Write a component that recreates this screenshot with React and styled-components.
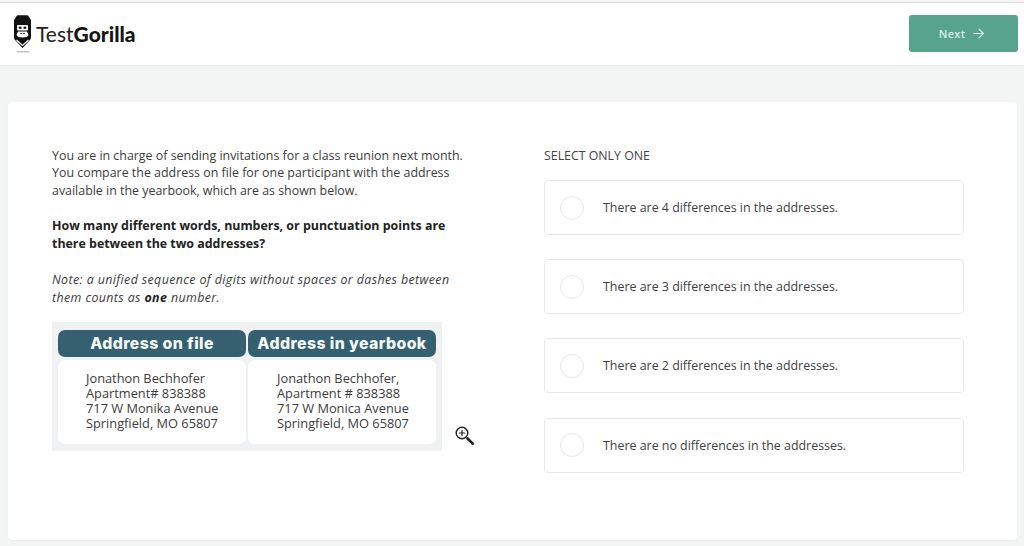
import React from "react";
import styled, { createGlobalStyle } from "styled-components";

const Global = createGlobalStyle`
  html, body { margin: 0; padding: 0; background: #f3f5f5; }
  body { font-family: "Open Sans", "Liberation Sans", sans-serif; color: #3a3a3a; }
  #root { height: 546px; overflow: hidden; }
`;

const Page = styled.div`
  height: 546px;
  display: flex;
  flex-direction: column;
  box-sizing: border-box;
  padding-top: 2px;
  background: #f3f5f5;
`;

const Header = styled.header`
  height: 64px;
  flex: none;
  box-sizing: border-box;
  background: #fff;
  border-top: 1px solid #dfe1e1;
  border-bottom: 1px solid #e9ecec;
  display: flex;
  align-items: flex-start;
  justify-content: space-between;
  padding: 12px 6px 0 13px;
`;

const Logo = styled.div`
  display: flex;
  align-items: flex-start;
  gap: 3px;
`;

const LogoText = styled.div`
  font-family: "Lato", "Open Sans", sans-serif;
  font-size: 21px;
  line-height: 24px;
  margin-top: 7px;
  color: #222;
  font-weight: 400;
  b { font-weight: 900; color: #151515; }
`;

const NextButton = styled.button`
  width: 109px;
  height: 37px;
  border: 0;
  border-radius: 3px;
  background: #58a38c;
  color: #d9efe8;
  font-family: inherit;
  font-size: 11px;
  font-weight: 600;
  letter-spacing: 0.3px;
  display: flex;
  align-items: center;
  justify-content: center;
  gap: 7px;
  padding: 0 3px 0 0;
`;

const Card = styled.main`
  margin: 36px 7px 0 8px;
  height: 438px;
  background: #fff;
  border-radius: 4px;
  box-shadow: 0 1px 2px rgba(0, 0, 0, 0.04);
  display: grid;
  grid-template-columns: 492px 420px;
  box-sizing: border-box;
  padding: 44.5px 0 0 44px;
`;

const Left = styled.section`
  width: 440px;
  display: flex;
  flex-direction: column;
`;

const Para = styled.p`
  margin: 0 0 17.5px;
  font-size: 12.41px;
  line-height: 17.75px;
  color: #3c3c3c;
  white-space: nowrap;
  font-style: ${(p) => (p.$italic ? "italic" : "normal")};
  font-weight: ${(p) => (p.$bold ? 700 : 400)};
  ${(p) => p.$bold && "color: #222;"}
  ${(p) => p.$italic && "letter-spacing: 0.39px; margin: 0.75px 0 15.5px;"}
  b { font-weight: 700; color: #222; }
`;

const ImageRow = styled.div`
  display: flex;
  align-items: flex-end;
  gap: 13px;
`;

const Figure = styled.div`
  width: 390px;
  height: 129px;
  box-sizing: border-box;
  background: #eff1f2;
  padding: 8px 6px 7px;
  display: grid;
  grid-template-columns: 188px 188px;
  grid-template-rows: 27px 1fr;
  column-gap: 2px;
  row-gap: 3px;
`;

const Th = styled.div`
  background: #34606f;
  border-radius: 7px;
  color: #f6f8f8;
  font-family: "Inter", "Open Sans", sans-serif;
  font-weight: 800;
  font-size: 15.8px;
  letter-spacing: 0.42px;
  display: flex;
  align-items: center;
  justify-content: center;
  white-space: nowrap;
`;

const Td = styled.div`
  background: #fff;
  border-radius: 7px;
  font-size: 12.8px;
  line-height: 15px;
  color: #3c3c3c;
  padding: 11px 0 0 ${(p) => p.$inset}px;
  white-space: nowrap;
`;

const ZoomIcon = styled.svg`
  width: 20px;
  height: 20px;
  flex: none;
  margin-bottom: 6px;
`;

const Right = styled.section`
  display: flex;
  flex-direction: column;
`;

const Select = styled.div`
  font-size: 12.35px;
  line-height: 17px;
  color: #444;
  margin-bottom: 16.5px;
`;

const Options = styled.div`
  display: flex;
  flex-direction: column;
  gap: 24.2px;
`;

const Option = styled.div`
  height: 55px;
  box-sizing: border-box;
  border: 1px solid #e8eaea;
  border-radius: 4px;
  background: #fff;
  display: flex;
  align-items: center;
  padding-left: 15px;
  gap: 19px;
  font-size: 12.41px;
  color: #3f3f3f;
`;

const Radio = styled.span`
  width: 24px;
  height: 24px;
  box-sizing: border-box;
  border: 1px solid #e6e8e8;
  border-radius: 50%;
  flex: none;
`;

const GorillaLogo = () => (
  <svg width="20" height="40" viewBox="0 0 20 40" aria-hidden="true">
    <path d="M4.500 0.300 H14 Q15.500 0.300 16 2 L18 5 V22 Q18 24 16.500 25.500 L9.500 33 L2.500 25.500 Q1 24 1 22 V5 L3 2 Q3.500 0.300 4.500 0.300 Z" fill="#111" />
    <rect x="4" y="10" width="11" height="5.500" rx="1" fill="#fff" />
    <rect x="5.800" y="11.600" width="2.600" height="2.200" fill="#111" />
    <rect x="10.600" y="11.600" width="2.600" height="2.200" fill="#111" />
    <path d="M5 16.500 H14 L15.500 20 Q14.500 22.500 9.500 22.500 Q4.500 22.500 3.500 20 Z" fill="#fff" />
    <circle cx="8" cy="18.500" r="0.800" fill="#111" />
    <circle cx="11" cy="18.500" r="0.800" fill="#111" />
    <path d="M3.500 25 L9.500 30.500 L15.500 25" fill="none" stroke="#fff" strokeWidth="1.100" />
    <rect x="3.500" y="36" width="13" height="1.500" rx="0.700" fill="#c4c4c4" />
  </svg>
);

const options = [
  "There are 4 differences in the addresses.",
  "There are 3 differences in the addresses.",
  "There are 2 differences in the addresses.",
  "There are no differences in the addresses.",
];

export default function App() {
  return (
    <Page>
      <Global />
      <Header>
        <Logo>
          <GorillaLogo />
          <LogoText>
            Test<b>Gorilla</b>
          </LogoText>
        </Logo>
        <NextButton>
          Next
          <svg width="13" height="13" viewBox="0 0 24 24" fill="none" stroke="#d9efe8" strokeWidth="2" strokeLinecap="round" strokeLinejoin="round">
            <path d="M3 12h18M13 4l8 8-8 8" />
          </svg>
        </NextButton>
      </Header>
      <Card>
        <Left>
          <Para>
            You are in charge of sending invitations for a class reunion next month.
            <br />
            You compare the address on file for one participant with the address
            <br />
            available in the yearbook, which are as shown below.
          </Para>
          <Para $bold>
            How many different words, numbers, or punctuation points are
            <br />
            there between the two addresses?
          </Para>
          <Para $italic>
            Note: a unified sequence of digits without spaces or dashes between
            <br />
            them counts as <b>one</b> number.
          </Para>
          <ImageRow>
            <Figure>
              <Th>Address on file</Th>
              <Th>Address in yearbook</Th>
              <Td $inset={28}>
                Jonathon Bechhofer
                <br />
                Apartment# 838388
                <br />
                717 W Monika Avenue
                <br />
                Springfield, MO 65807
              </Td>
              <Td $inset={29}>
                Jonathon Bechhofer,
                <br />
                Apartment # 838388
                <br />
                717 W Monica Avenue
                <br />
                Springfield, MO 65807
              </Td>
            </Figure>
            <ZoomIcon viewBox="0 0 20 20" fill="none" stroke="#222" strokeLinecap="round">
              <circle cx="7" cy="8" r="5.800" strokeWidth="1.400" />
              <path d="M7 5.300v5.400M4.300 8h5.400" strokeWidth="1.200" />
              <path d="M12.500 13.500l5.200 5.200" strokeWidth="2.600" />
            </ZoomIcon>
          </ImageRow>
        </Left>
        <Right>
          <Select>SELECT ONLY ONE</Select>
          <Options>
            {options.map((o) => (
              <Option key={o}>
                <Radio />
                {o}
              </Option>
            ))}
          </Options>
        </Right>
      </Card>
    </Page>
  );
}
